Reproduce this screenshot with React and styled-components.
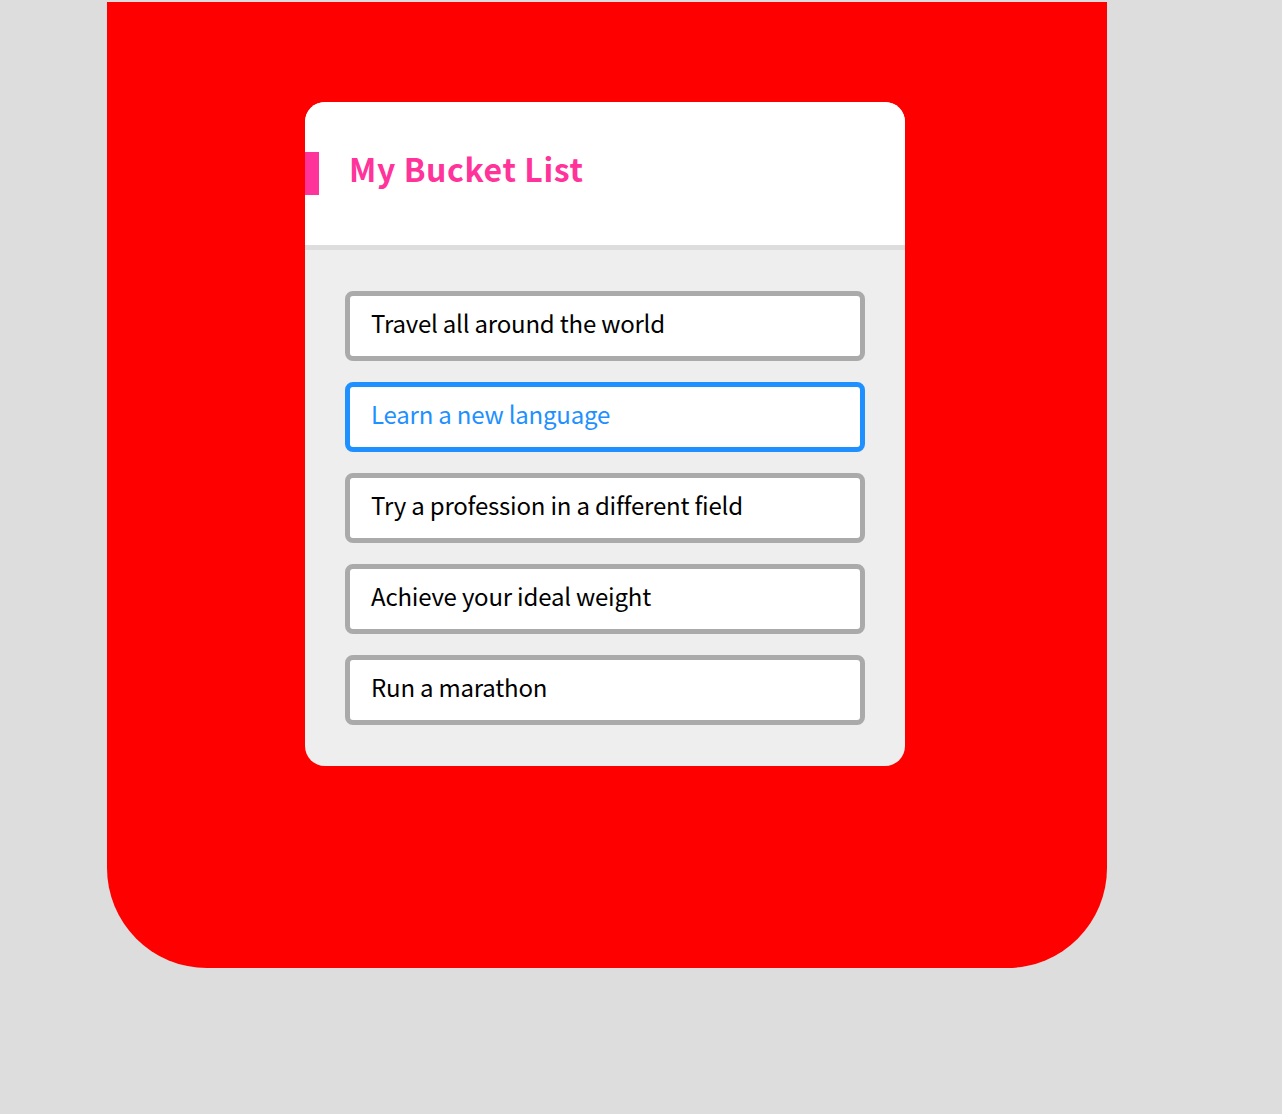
import React from 'react';
import styled, { createGlobalStyle } from 'styled-components';

const GlobalStyle = createGlobalStyle`
  body {
    margin: 0;
    background: #dddddd;
    font-family: "Noto Sans CJK KR", "Noto Sans", sans-serif;
  }
`;

const Stage = styled.div`
  width: 1000px;
  margin: 2px 0 0 107px;
  padding: 100px 0 202px 198px;
  box-sizing: border-box;
  background: #ff0000;
  border-radius: 0 0 100px 100px;
`;

const Card = styled.div`
  width: 600px;
  background: #eeeeee;
  border-radius: 20px;
  overflow: hidden;
`;

const Header = styled.div`
  display: flex;
  align-items: center;
  height: 143px;
  background: #ffffff;
  border-bottom: 5px solid #dddddd;
`;

const Marker = styled.div`
  width: 14px;
  height: 43px;
  margin-right: 30px;
  background: #ff3399;
`;

const Title = styled.h1`
  margin: 0;
  padding-bottom: 12px;
  font-size: 32px;
  font-weight: 700;
  letter-spacing: 0.6px;
  color: #ff3399;
`;

const List = styled.div`
  display: flex;
  flex-direction: column;
  gap: 21px;
  padding: 41px 40px 41px;
`;

const Item = styled.div`
  display: flex;
  align-items: center;
  height: 70px;
  box-sizing: border-box;
  padding: 0 0 7px 21px;
  background: #ffffff;
  border: 5px solid ${({ active }) => (active ? '#1e90ff' : '#aaaaaa')};
  border-radius: 8px;
  font-size: 24px;
  letter-spacing: -0.2px;
  color: ${({ active }) => (active ? '#1e90ff' : '#000000')};
`;

const items = [
  'Travel all around the world',
  'Learn a new language',
  'Try a profession in a different field',
  'Achieve your ideal weight',
  'Run a marathon',
];

const App = () => (
  <>
    <GlobalStyle />
    <Stage>
      <Card>
        <Header>
          <Marker />
          <Title>My Bucket List</Title>
        </Header>
        <List>
          {items.map((text, i) => (
            <Item key={text} active={i === 1}>
              {text}
            </Item>
          ))}
        </List>
      </Card>
    </Stage>
  </>
);

export default App;
